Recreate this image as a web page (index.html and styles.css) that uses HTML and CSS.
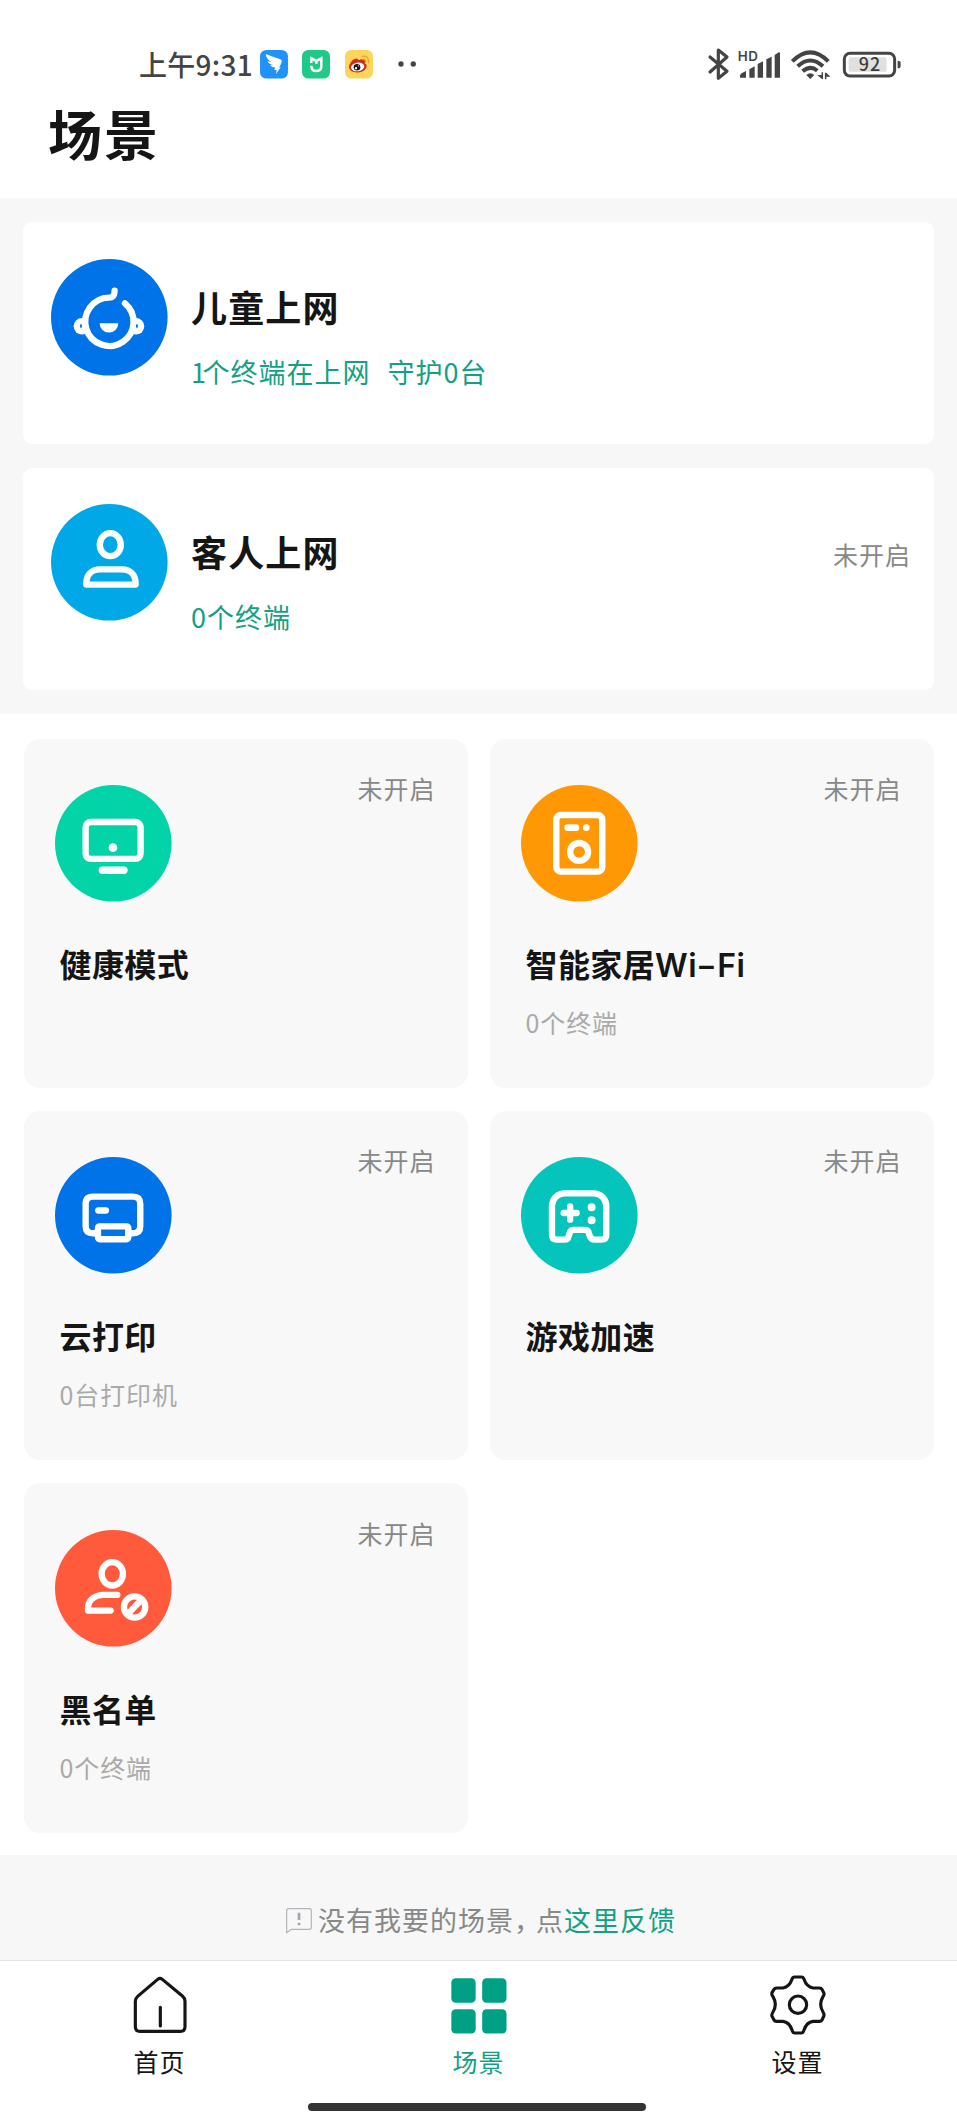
FILE: index.html
```html
<!DOCTYPE html>
<html lang="zh-CN">
<head>
<meta charset="utf-8">
<title>场景</title>
<meta name="viewport" content="width=device-width, initial-scale=1">
<link rel="stylesheet" href="styles.css">
</head>
<body>
<header class="header">
  <div class="status">
    <span class="clock">上午9:31</span>
    <div class="apps">
      <svg class="app" viewBox="0 0 84 86"><rect width="84" height="86" rx="19" fill="#1f93fb"/><path fill="#fff" d="M17 12Q40 21 61 28Q67 30 65 37Q62 46 57 52H62L48 72L50 60H43L46 53Q35 53 30 45L40 46Q26 42 22 34L36 37Q19 28 17 12Z"/></svg>
      <svg class="app" viewBox="0 0 84 86"><rect width="84" height="86" rx="19" fill="#1fc986"/><path fill="none" stroke="#fff" stroke-width="7.500" d="M28 39V25L43 33L58 25V50Q58 63 43 63Q28 63 28 47M43 33V41"/></svg>
      <svg class="app" viewBox="0 0 84 86"><rect width="84" height="86" rx="19" fill="#fbd65a"/><path fill="#cf2a1f" d="M12 51Q14 36 28 27Q38 22 41 31Q53 25 59 31Q62 35 59 40Q68 44 64 53Q57 68 36 68Q13 66 12 51Z"/><ellipse cx="38" cy="51" rx="20" ry="13" fill="#fff" transform="rotate(-8 38 51)"/><circle cx="36" cy="52" r="10" fill="#161616"/><circle cx="33" cy="55" r="3.500" fill="#fff"/><circle cx="40" cy="48" r="1.800" fill="#fff"/><path d="M52 19Q72 16 71 38M54 28Q63 27 62 36" fill="none" stroke="#e6a52c" stroke-width="4" stroke-linecap="round"/></svg>
    </div>
    <svg class="dots" viewBox="0 0 56 18"><circle cx="9" cy="9" r="8"/><circle cx="46" cy="9" r="8"/></svg>
    <div class="system">
      <svg class="bt" viewBox="205 53 63 99"><path d="M211 80L262 123L236 144V59L262 80L211 125" fill="none" stroke="#444" stroke-width="9.500" stroke-linejoin="round" stroke-linecap="round"/></svg>
      <svg class="signal" viewBox="297 53 128 99"><text x="296" y="93" class="hd" textLength="61">HD</text><g fill="#444"><path d="M303 142V137Q303 131 309 128L321 122V142Z"/><path d="M331 142V117L347 108V142Z"/><path d="M356 142V101L372 93V142Z"/><path d="M382 142V87L398 79V142Z"/><path d="M407 142V74L419 66Q423 64 423 69V142Z"/></g></svg>
      <svg class="wifi" viewBox="456 53 118 99"><g fill="none" stroke="#444" stroke-width="12"><path d="M460 93Q514 39 568 93"/><path d="M476 108Q514 73 552 108"/><path d="M491 123Q514 103 535 121"/></g><path fill="#444" d="M502 134Q514 123 526 134L514 146Z"/><path d="M550 126V146M550 144L541 136H550M560 147V127M560 129L569 137H560" fill="#444" stroke="#444" stroke-width="4.500"/></svg>
      <svg class="battery" viewBox="610 53 175 99"><rect x="614" y="69" width="151" height="68" rx="17" fill="none" stroke="#444" stroke-width="9"/><rect x="627" y="81" width="114" height="43" rx="5" fill="#e0e0e0"/><path d="M774 91Q783 91 783 98V106Q783 114 774 114Z" fill="#444"/><text x="657" y="122" class="level" textLength="65">92</text></svg>
    </div>
  </div>
  <h1 class="title">场景</h1>
</header>

<section class="features">
  <article class="feature">
    <svg class="badge" viewBox="0 0 350 350"><circle cx="175" cy="175" r="175" fill="#0073e8"/><g fill="#fff"><circle cx="93" cy="202" r="25"/><circle cx="255" cy="202" r="25"/></g><path class="line" fill="#0073e8" d="M191 95C191 109 186 116 174 116A72.500 72.500 0 1 0 222 133"/><g fill="#0073e8"><ellipse cx="90" cy="201" rx="3" ry="6"/><ellipse cx="258" cy="201" rx="3" ry="6"/></g><path fill="#fff" d="M146 193H202A28 28 0 0 1 146 193Z"/></svg>
    <div class="info"><h2 class="feature-name">儿童上网</h2><p class="feature-note"><span class="narrow">1</span>个终端在上网<span class="gap"></span>守护0台</p></div>
  </article>
  <article class="feature">
    <svg class="badge" viewBox="0 0 350 350"><circle cx="175" cy="175" r="175" fill="#00a8e8"/><g class="line"><ellipse cx="178" cy="122" rx="31.500" ry="34.500"/><path d="M106 242V238C106 213 122 196 146 196H214C238 196 254 213 254 238V242Z"/></g></svg>
    <div class="info"><h2 class="feature-name">客人上网</h2><p class="feature-note">0个终端</p></div>
    <span class="state">未开启</span>
  </article>
</section>

<main class="tiles">
  <article class="tile">
    <div class="tile-top">
      <svg class="badge" viewBox="0 0 350 350"><circle cx="175" cy="175" r="175" fill="#02d4a8"/><rect class="line" x="92" y="111" width="165" height="111" rx="16"/><g fill="#fff"><circle cx="174" cy="188" r="13"/><rect x="131" y="245" width="87" height="22" rx="11"/></g></svg>
      <span class="state">未开启</span>
    </div>
    <h2 class="tile-name">健康模式</h2>
  </article>
  <article class="tile">
    <div class="tile-top">
      <svg class="badge" viewBox="0 0 350 350"><circle cx="175" cy="175" r="175" fill="#ff9804"/><g class="line"><rect x="106" y="90" width="138" height="170" rx="14"/><circle cx="174.500" cy="201" r="27"/></g><g fill="#fff"><rect x="130" y="118" width="45" height="20" rx="10"/><circle cx="196" cy="128" r="10"/></g></svg>
      <span class="state">未开启</span>
    </div>
    <h2 class="tile-name">智能家居<span class="latin">Wi<span class="dash">-</span>Fi</span></h2>
    <p class="tile-note">0个终端</p>
  </article>
  <article class="tile">
    <div class="tile-top">
      <svg class="badge" viewBox="0 0 350 350"><circle cx="175" cy="175" r="175" fill="#0073e8"/><g class="line"><path d="M129 229H114Q92 229 92 207V141Q92 119 114 119H234Q256 119 256 141V207Q256 229 234 229H220"/><rect x="129" y="208" width="91" height="39" rx="5"/><path d="M130 160.500H153"/></g></svg>
      <span class="state">未开启</span>
    </div>
    <h2 class="tile-name">云打印</h2>
    <p class="tile-note">0台打印机</p>
  </article>
  <article class="tile">
    <div class="tile-top">
      <svg class="badge" viewBox="0 0 350 350"><circle cx="175" cy="175" r="175" fill="#04c4bb"/><g class="line"><path d="M93 147A38 38 0 0 1 131 109H218A38 38 0 0 1 256 147V234Q256 248 242 248H222Q209 248 206 236L204 229Q202 219 192 219H158Q148 219 146 229L143 238Q141 248 130 248H107Q93 248 93 234Z"/><path d="M128 168H167M147.500 148V188"/></g><g fill="#fff"><circle cx="212" cy="151" r="12"/><circle cx="212" cy="190" r="12"/></g></svg>
      <span class="state">未开启</span>
    </div>
    <h2 class="tile-name">游戏加速</h2>
  </article>
  <article class="tile">
    <div class="tile-top">
      <svg class="badge" viewBox="0 0 350 350"><circle cx="175" cy="175" r="175" fill="#ff5a3c"/><g class="line"><ellipse cx="172" cy="131.500" rx="32" ry="35"/><path d="M187 194.500H146C118 194.500 99 212 99 236V242H167"/><circle cx="239" cy="231" r="32"/><path d="M222 249L257 212"/></g></svg>
      <span class="state">未开启</span>
    </div>
    <h2 class="tile-name">黑名单</h2>
    <p class="tile-note">0个终端</p>
  </article>
</main>

<footer class="feedback">
  <svg class="bubble" viewBox="0 0 78 78"><path d="M2 74V8Q2 2 8 2H70Q76 2 76 8V58Q76 64 70 64H16Z" fill="none" stroke="#b2b4ba" stroke-width="3.500" stroke-linejoin="round"/><path d="M39 14V36M39 44V52" stroke="#a4a6aa" stroke-width="8"/></svg>
  <p class="ask">没有我要的场景<span class="comma">，</span>点<a class="link">这里反馈</a></p>
</footer>

<nav class="nav">
  <a class="tab"><svg class="tab-icon" viewBox="0 0 180 180"><path d="M83 13Q90 7 97 13L158 64Q165 70 165 79V155Q165 169 151 169H30Q16 169 16 155V79Q16 70 23 64ZM91 97V153" fill="none" stroke="#151515" stroke-width="9.500" stroke-linecap="round" stroke-linejoin="round"/></svg>首页</a>
  <a class="tab active"><svg class="tab-icon" viewBox="0 0 180 180"><g fill="#00a085"><rect x="7" y="10" width="73" height="73" rx="13"/><rect x="99.500" y="10" width="73" height="73" rx="13"/><rect x="7" y="102.500" width="73" height="73" rx="13"/><rect x="99.500" y="102.500" width="73" height="73" rx="13"/></g></svg>场景</a>
  <a class="tab"><svg class="tab-icon" viewBox="0 0 180 180"><g fill="none" stroke="#151515" stroke-width="9.500" stroke-linejoin="round"><path d="M80 6H100Q106 6 108 13Q116 36 135 39H154Q160 39 162 43L167 53Q170 58 165 65Q151 88 165 111Q170 119 167 124L162 135Q160 139 154 139H135Q116 141 108 165Q106 174 100 174H80Q74 174 72 165Q64 141 45 139H26Q20 139 18 135L12 124Q10 119 15 111Q29 88 15 65Q10 58 12 53L18 43Q20 39 26 39H45Q64 36 72 13Q74 6 80 6Z"/><circle cx="90" cy="89" r="26"/></g></svg>设置</a>
</nav>
<div class="gesture"><span class="pill"></span></div>
</body>
</html>
```
FILE: styles.css
```css
* { box-sizing: border-box; margin: 0; padding: 0; }
body {
  width: 957px;
  background: #fff;
  color: #151515;
  font-family: "Noto Sans CJK SC", sans-serif;
  overflow: hidden;
}
svg { display: block; flex: none; overflow: visible; }

.header { height: 198px; padding-top: 45px; }
.status { display: flex; align-items: center; height: 38px; padding: 0 56px 0 139px; }
.clock { width: 121px; font-size: 28px; line-height: 38px; font-weight: 500; color: #444; white-space: nowrap; letter-spacing: 0.3px; margin-top: -1px; }
.apps { display: flex; gap: 14.400px; }
.app { width: 28px; height: 28.600px; }
.dots { width: 18.600px; height: 6px; margin-left: 25px; fill: #444; }
.system { display: flex; margin-left: auto; }
.bt { width: 21px; height: 33px; }
.signal { width: 42.700px; height: 33px; margin-left: 9.600px; }
.wifi { width: 39.300px; height: 33px; margin-left: 10.300px; }
.battery { width: 58.300px; height: 33px; margin-left: 12px; }
.hd { font: 600 40px "Inter", sans-serif; fill: #444; }
.level { font: 500 54px "Noto Sans CJK SC", sans-serif; fill: #3c3c3c; }
.title { padding-left: 48px; font-size: 54px; line-height: 99px; font-weight: 700; letter-spacing: 2px; }

.features {
  display: flex;
  flex-direction: column;
  gap: 23.500px;
  height: 516px;
  padding: 24px 23px;
  background: #f7f7f7;
}
.feature {
  display: flex;
  height: 222.800px;
  padding: 36.500px 23px 0 27.500px;
  border-radius: 9px;
  background: #fff;
}
.badge { width: 116.600px; height: 116.600px; }
.line { stroke: #fff; stroke-width: 19px; stroke-linecap: round; stroke-linejoin: round; }
.line:not([fill]) { fill: none; }
.info { margin-left: 24px; padding-top: 22px; }
.feature-name { font-size: 36px; line-height: 50px; font-weight: 700; letter-spacing: 1.100px; }
.feature-note { margin-top: 17px; font-size: 27px; line-height: 48px; letter-spacing: 1px; color: #12a184; }
.narrow { letter-spacing: -3.500px; }
.gap { display: inline-block; width: 17px; }
.state { margin-left: auto; font-size: 25px; line-height: 36px; letter-spacing: 1px; color: #888; }
.feature .state { margin-top: 32px; }

.tiles {
  display: grid;
  grid-template-columns: 1fr 1fr;
  grid-auto-rows: 349.300px;
  gap: 23.200px 22px;
  height: 1141px;
  padding: 24.500px 23px 0 24px;
}
.tile { padding: 46.500px 32.500px 0 30.500px; border-radius: 16px; background: #f8f8f8; }
.tile-top { display: flex; }
.tile-top .state { margin-top: -15px; }
.tile-name { margin: 39px 0 0 5px; font-size: 32px; line-height: 44px; font-weight: 700; letter-spacing: 0.400px; white-space: nowrap; }
.latin { font-family: "Inter", sans-serif; font-weight: 600; line-height: 1; letter-spacing: 0.400px; }
.dash { display: inline-block; margin: 0 2.500px; transform: scaleX(1.4); }
.tile-note { margin: 19px 0 0 5px; font-size: 25px; line-height: 36px; letter-spacing: 0.900px; color: #aaa; }

.feedback {
  display: flex;
  justify-content: center;
  height: 105px;
  padding: 41px 0 0 5px;
  background: #f7f7f7;
}
.bubble { width: 26px; height: 26px; margin: 11.500px 6px 0 0; }
.ask { font-size: 27px; line-height: 48px; letter-spacing: 1px; color: #888; }
.comma { letter-spacing: -5px; }
.link { color: #12a184; }

.nav { display: grid; grid-template-columns: repeat(3, 1fr); height: 132px; border-top: 1px solid #e3e3e3; }
.tab { display: flex; flex-direction: column; align-items: center; padding-top: 14px; font-size: 25px; line-height: 36px; letter-spacing: 1px; }
.tab-icon { width: 60px; height: 60px; margin-bottom: 8px; }
.active { color: #12a184; }
.gesture { display: flex; justify-content: center; height: 35px; padding-top: 11px; }
.pill { width: 338px; height: 8px; border-radius: 4px; background: #333; margin-right: 3px; }
```
